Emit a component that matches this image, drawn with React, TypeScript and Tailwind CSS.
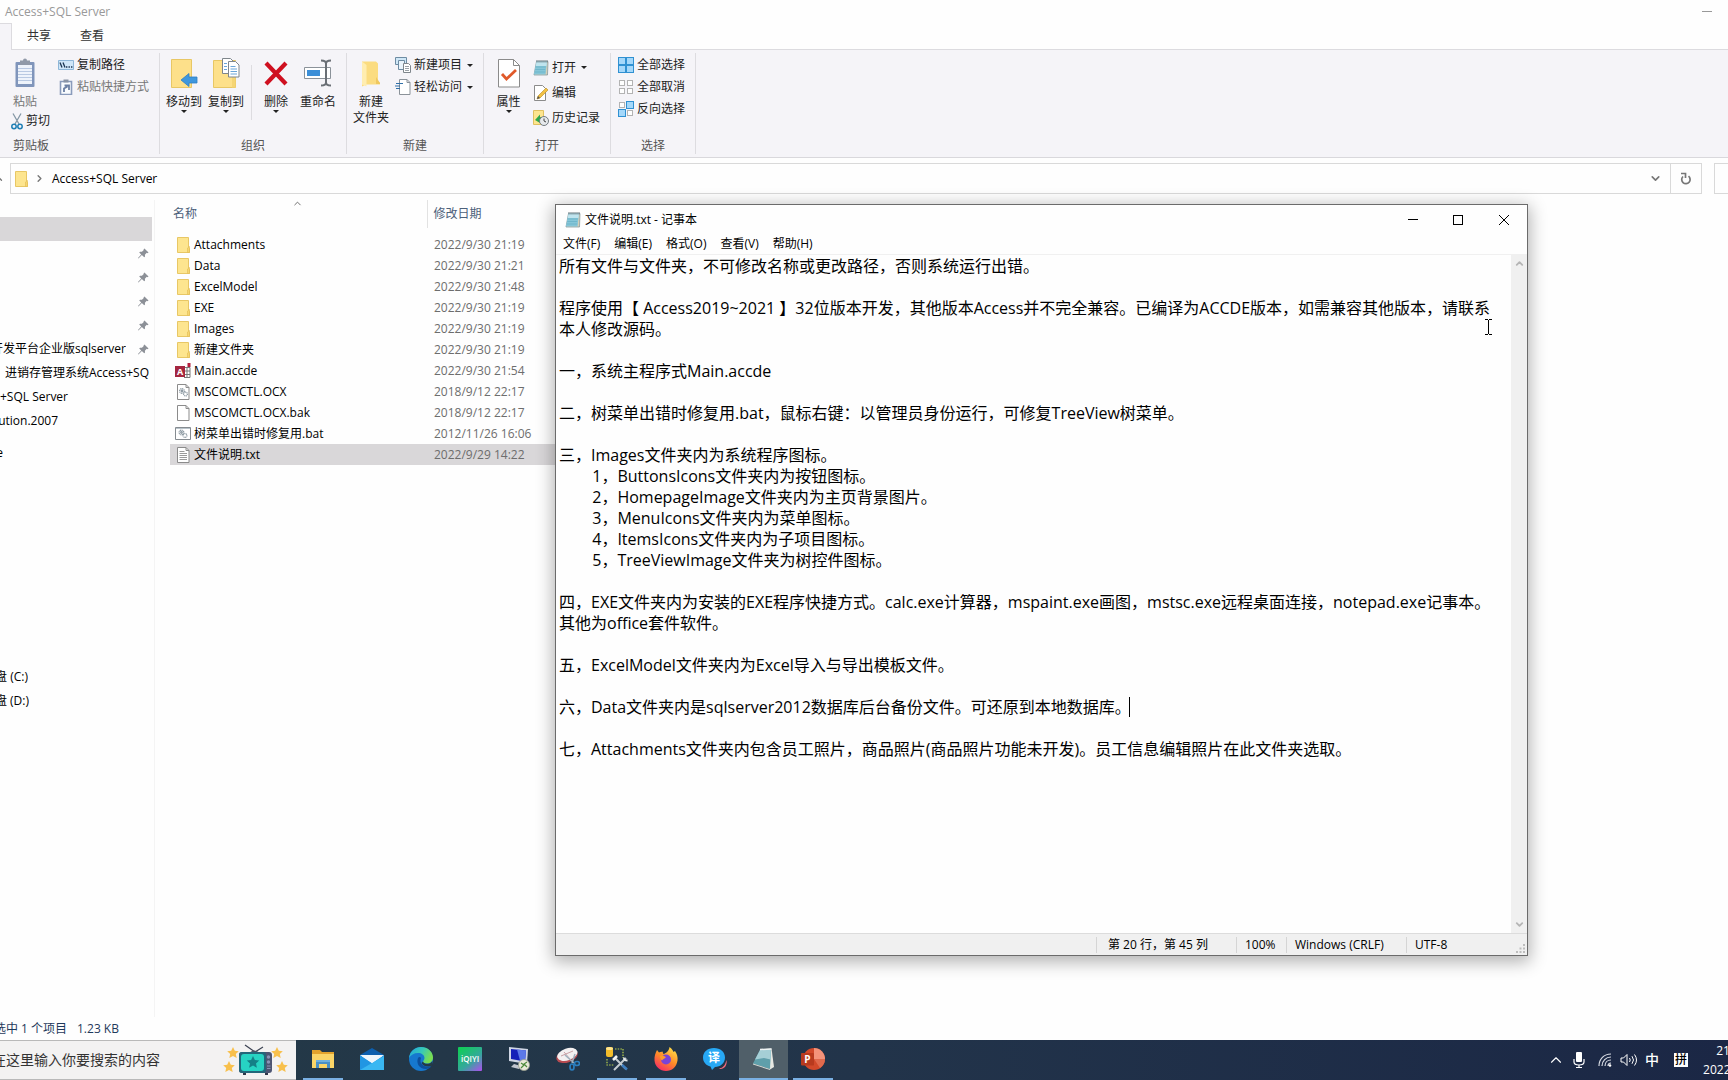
import React from "react";
import { ChevronDown, ChevronRight, ChevronUp } from "lucide-react";
import clsx from "clsx";

interface FileEntry {
  name: string;
  date: string;
  icon: React.ReactNode;
  selected?: boolean;
}

interface IconProps {
  className?: string;
}

const FolderIcon = ({ className = "w-[13px] h-4" }: IconProps) => (
  <svg viewBox="0 0 13 16" preserveAspectRatio="none" className={className}>
    <path d="M.5.5h11v11l1 0v4H.5z" fill="#fde58f" stroke="#e8c765" />
    <path d="M10.500 15.500V11l2-1.500v6z" fill="#f6d671" stroke="#e0bc55" strokeWidth=".6" />
  </svg>
);

const PageIcon = ({ lines = false, gears = false }: { lines?: boolean; gears?: boolean }) => (
  <svg viewBox="0 0 13 16" className="w-[13px] h-4">
    <path d="M.5.5h8.500l3 3v12H.5z" fill="#fff" stroke="#8b8b8b" />
    <path d="M9 .5v3h3" fill="none" stroke="#8b8b8b" />
    {lines && <path d="M2.500 4.500h5M2.500 6.500h7.500M2.500 8.500h7.500M2.500 10.500h7.500M2.500 12.500h7.500" stroke="#9a9a9a" />}
    {gears && <Gears x={5} y={7} />}
  </svg>
);

const Gears = ({ x, y }: { x: number; y: number }) => (
  <g fill="none" stroke="#8d9aa3" strokeWidth="1.200">
    <circle cx={x} cy={y} r="2.400" strokeDasharray="1.200 .5" />
    <circle cx={x} cy={y} r=".8" />
    <circle cx={x + 3.5} cy={y + 3} r="1.900" strokeDasharray="1 .5" />
  </g>
);

const BatIcon = () => (
  <svg viewBox="0 0 16 13" className="w-4 h-[13px]">
    <path d="M.5.5h15v12H.5z" fill="#fff" stroke="#858b90" />
    <path d="M1 1.500h14" stroke="#b9c3ca" />
    <Gears x={6.5} y={5.5} />
  </svg>
);

const AccessIcon = () => (
  <svg viewBox="0 0 16 16" className="w-4 h-4">
    <path d="M9 4.500h6v10H9M9 8h6M9 11.500h6M12 4.500v10" fill="#fff" stroke="#777" />
    <path d="M0 3h10v11H0z" fill="#a4263f" />
    <path d="M12.500 0h3v4h-3z" fill="#b51f3d" />
    <text x="5" y="12" textAnchor="middle" fontSize="9" fontWeight="bold" fill="#fff" fontFamily="Open Sans">A</text>
  </svg>
);

const PinIcon = () => (
  <svg viewBox="0 0 12 12" className="w-[11px] h-[11px]">
    <path d="M7 .5 11.500 5l-1.200.6-.8-.3-2 2 .2 2-.9.9-2.600-2.600L.5 11.500 0 11l3.500-4L1.300 4.900l.9-.9 2.100.2 2-2-.2-.9z" fill="#8c9097" />
  </svg>
);

const PasteIcon = () => (
  <svg viewBox="0 0 22 30" className="w-[22px] h-[30px]">
    <rect x="1.500" y="4" width="19" height="25" rx="1" fill="#8095bb" />
    <path d="M4 7h14v19H4z" fill="#eef3fb" />
    <path d="M6 2.500h3a2 2 0 0 1 4 0h3V7H6z" fill="#9099a8" />
    <path d="M4 10.500h14M4 13.500h14M4 16.500h14M4 19.500h14M4 22.500h14" stroke="#b9c9e2" />
  </svg>
);

const CutIcon = () => (
  <svg viewBox="0 0 12 17" className="w-3 h-[17px]">
    <path d="M2 .5 8 11M10 .5 4 11" stroke="#8497a5" strokeWidth="1.300" fill="none" />
    <circle cx="3" cy="13.500" r="2.200" fill="none" stroke="#1f7fb5" strokeWidth="1.500" />
    <circle cx="9" cy="13.500" r="2.200" fill="none" stroke="#1f7fb5" strokeWidth="1.500" />
  </svg>
);

const CopyPathIcon = () => (
  <svg viewBox="0 0 16 16" className="w-4 h-4">
    <path d="M.5 3.500h15v9H.5z" fill="#cfe6f8" stroke="#8db6d8" />
    <path d="m2 5.500 2 5M5 5.500l2 5" stroke="#1b3552" strokeWidth="1.300" />
    <path d="M8 10h1.400M10.500 10h1.400M13 10h1.400" stroke="#1b3552" strokeWidth="1.300" />
  </svg>
);

const PasteShortcutIcon = () => (
  <svg viewBox="0 0 16 16" className="w-4 h-4">
    <path d="M2.500 2.500h11v13h-11z" fill="#fafcff" stroke="#8a9bbb" strokeWidth="1.600" />
    <path d="M5.500.5h5v3h-5z" fill="#8a94a6" />
    <path d="M6 13V9.500L9.500 7.500M6.500 6.500H11V11" fill="none" stroke="#6b7fa3" strokeWidth="1.800" />
  </svg>
);

const MoveToIcon = () => (
  <svg viewBox="0 0 28 32" className="w-7 h-8">
    <path d="M1.500 2.500h20v28h-20z" fill="#fde08a" stroke="#e8c765" />
    <path d="m11 23 8-6.500V20h8v6h-8v3.500z" fill="#3f97dd" stroke="#2f7fc4" strokeWidth=".8" />
  </svg>
);

const CopyToIcon = () => (
  <svg viewBox="0 0 28 32" className="w-7 h-8">
    <path d="M1.500 3.500h22v27h-22z" fill="#fde08a" stroke="#e8c765" />
    <path d="M20 30.500v-11l3.500-1v12z" fill="#f5d575" />
    <path d="M10.500 1.500h8l3 3v12h-11z" fill="#fff" stroke="#7f868c" />
    <path d="M16.500 4.500h7l3.500 3.500v12H16.500z" fill="#fff" stroke="#7f868c" />
    <path d="M12 6.500h3M12 9.500h3M12 12.500h3M18.500 9.500h5M18.500 12h6.500M18.500 14.500h6.500M18.500 17h6.500" stroke="#6aa5d8" />
  </svg>
);

const DeleteIcon = () => (
  <svg viewBox="0 0 28 32" className="w-7 h-8">
    <path d="m4 6 20 21M24 6 4 27" stroke="#cf1020" strokeWidth="4.200" />
  </svg>
);

const RenameIcon = () => (
  <svg viewBox="0 0 28 32" className="w-7 h-8">
    <path d="M.5 10.500h26v11H.5z" fill="#fff" stroke="#8b9299" />
    <path d="M3 13h13v6H3z" fill="#3c8fd8" />
    <path d="M17 3.500q5 0 5 3v19q0 3-5 3M27 3.500q-5 0-5 3v19q0 3 5 3" fill="none" stroke="#6a6f75" strokeWidth="2" />
  </svg>
);

const NewFolderIcon = () => (
  <svg viewBox="0 0 20 32" className="w-5 h-8">
    <path d="M1 4.500h14l2 2V25l2 .5v2H5l-4 2z" fill="#fbdc80" />
    <path d="M1 4.500 5.500 8v21.500l-4.500-2z" fill="#ffedb0" />
    <path d="M15 27V20l4 6v1z" fill="#efc85f" />
  </svg>
);

const NewItemIcon = () => (
  <svg viewBox="0 0 16 16" className="w-4 h-4">
    <path d="M.5.5h11v7H.5z" fill="#cfe7f7" stroke="#6e8ca3" />
    <path d="M3.500 3.500h6v9h-6z" fill="#eaf4fb" stroke="#6e8ca3" />
    <path d="M8.500 6.500h5l2 2v7h-7z" fill="#fff" stroke="#7f868c" />
    <path d="M10 9.500h4M10 11.500h4M10 13.500h4" stroke="#9aa1a7" />
  </svg>
);

const EasyAccessIcon = () => (
  <svg viewBox="0 0 16 16" className="w-4 h-4">
    <path d="M4.500.5h7.500l3 3v12H4.500z" fill="#fff" stroke="#8b9299" />
    <path d="M12 .5v3h3" fill="none" stroke="#8b9299" />
    <path d="M1 4.500h7M0 7h5M1 9.500h4" stroke="#2f6fa8" strokeWidth="1.200" />
  </svg>
);

const PropertiesIcon = () => (
  <svg viewBox="0 0 22 32" className="w-[22px] h-8">
    <path d="M.5 2.500h15l6 6v21.500H.5z" fill="#fff" stroke="#8b8b8b" />
    <path d="M15.500 2.500v6h6" fill="none" stroke="#8b8b8b" />
    <path d="m4 17 4.500 5L18 13" fill="none" stroke="#e0592a" strokeWidth="2.800" />
  </svg>
);

const NotepadIcon = ({ className = "w-4 h-4" }: IconProps) => (
  <svg viewBox="0 0 16 16" className={className}>
    <path d="M3.500 1.500h11.500L14.500 15H1z" fill="#d5d0b8" stroke="#7c8f96" strokeWidth=".7" />
    <path d="M3.500 1.500h10.500l-1.500 13H.8z" fill="#86c6d8" />
    <path d="M3.500 1.500h10.500l-.5 4.500H2.800z" fill="#bfe4ee" />
    <path d="M4 0v2.500M6 0v2.500M8 0v2.500M10 0v2.500M12 0v2.500M14 0v2.500" stroke="#5a6a70" strokeWidth=".9" />
    <path d="M2.700 7h10M2.200 9.500h10M1.800 12h10.500" stroke="#5fabc2" strokeWidth=".6" />
  </svg>
);

const EditIcon = () => (
  <svg viewBox="0 0 16 16" className="w-4 h-4">
    <path d="M1.500.5h8l3 3v12h-11z" fill="#fff" stroke="#8b8b8b" />
    <path d="m4 14 1-3 8-8 2 2-8 8z" fill="#f2c144" stroke="#b98a22" strokeWidth=".6" />
    <path d="m4 14 1-3 2 2z" fill="#555" />
  </svg>
);

const HistoryIcon = () => (
  <svg viewBox="0 0 16 16" className="w-4 h-4">
    <path d="M.5.5h10v14H.5z" fill="#fde58f" stroke="#e0c060" />
    <path d="M2 10 7 4.500V7c3 0 4 1 4 2-2-.6-4 0-4 1v3z" fill="#2fa84a" />
    <circle cx="11" cy="11" r="4.500" fill="#e6e9ec" stroke="#727a80" />
    <path d="M11 8.500V11l2 1" fill="none" stroke="#444" />
  </svg>
);

const SelectIcon = ({ filled }: { filled: boolean[] }) => (
  <svg viewBox="0 0 16 16" className="w-4 h-4">
    {filled.map((on, i) => {
      const x = i % 2 ? 9 : 1;
      const y = i > 1 ? 9 : 1;
      return on ? (
        <rect key={i} x={x - 0.5} y={y - 0.5} width="7" height="7" fill="#a5d8fa" stroke="#3091d2" />
      ) : (
        <rect key={i} x={x + 0.5} y={y + 0.5} width="5" height="5" fill="#fff" stroke="#b3b3b3" />
      );
    })}
  </svg>
);

const Arrow = () => <span className="border-x-[3px] border-t-[3px] border-x-transparent border-t-[#222]" />;

interface RibbonButtonProps {
  icon: React.ReactNode;
  label: React.ReactNode;
  arrow?: boolean;
  muted?: boolean;
  className?: string;
}

const LargeButton = ({ icon, label, arrow, muted, className }: RibbonButtonProps) => (
  <button className={clsx("flex flex-col items-center pt-[7px]", muted && "text-[#777]", className)}>
    <span className="flex h-8 items-center justify-center">{icon}</span>
    <span className="mt-[5px] leading-4 whitespace-nowrap">{label}</span>
    {arrow && <Arrow />}
  </button>
);

const SmallButton = ({ icon, label, arrow, muted, className = "h-[22px]" }: RibbonButtonProps) => (
  <button className={clsx("flex items-center gap-[3px] whitespace-nowrap", muted && "text-[#777]", className)}>
    {icon}
    <span>{label}</span>
    {arrow && <span className="ml-[2px] flex"><Arrow /></span>}
  </button>
);

const RibbonGroup = ({ title, className, labelClass = "text-center", children }: {
  title: string;
  className: string;
  labelClass?: string;
  children: React.ReactNode;
}) => (
  <section className={clsx("flex shrink-0 flex-col border-r border-[#dddce0]", className)}>
    <div className="flex flex-1">{children}</div>
    <div className={clsx("text-[#555] leading-4", labelClass)}>{title}</div>
  </section>
);

const files: FileEntry[] = [
  { name: "Attachments", date: "2022/9/30 21:19", icon: <FolderIcon /> },
  { name: "Data", date: "2022/9/30 21:21", icon: <FolderIcon /> },
  { name: "ExcelModel", date: "2022/9/30 21:48", icon: <FolderIcon /> },
  { name: "EXE", date: "2022/9/30 21:19", icon: <FolderIcon /> },
  { name: "Images", date: "2022/9/30 21:19", icon: <FolderIcon /> },
  { name: "新建文件夹", date: "2022/9/30 21:19", icon: <FolderIcon /> },
  { name: "Main.accde", date: "2022/9/30 21:54", icon: <AccessIcon /> },
  { name: "MSCOMCTL.OCX", date: "2018/9/12 22:17", icon: <PageIcon gears /> },
  { name: "MSCOMCTL.OCX.bak", date: "2018/9/12 22:17", icon: <PageIcon /> },
  { name: "树菜单出错时修复用.bat", date: "2012/11/26 16:06", icon: <BatIcon /> },
  { name: "文件说明.txt", date: "2022/9/29 14:22", icon: <PageIcon lines />, selected: true },
];

const noteText = `所有文件与文件夹，不可修改名称或更改路径，否则系统运行出错。

程序使用【 Access2019~2021 】32位版本开发，其他版本Access并不完全兼容。已编译为ACCDE版本，如需兼容其他版本，请联系
本人修改源码。

一，系统主程序式Main.accde

二，树菜单出错时修复用.bat，鼠标右键：以管理员身份运行，可修复TreeView树菜单。

三，Images文件夹内为系统程序图标。
        1，ButtonsIcons文件夹内为按钮图标。
        2，HomepageImage文件夹内为主页背景图片。
        3，MenuIcons文件夹内为菜单图标。
        4，ItemsIcons文件夹内为子项目图标。
        5，TreeViewImage文件夹为树控件图标。

四，EXE文件夹内为安装的EXE程序快捷方式。calc.exe计算器，mspaint.exe画图，mstsc.exe远程桌面连接，notepad.exe记事本。
其他为office套件软件。

五，ExcelModel文件夹内为Excel导入与导出模板文件。

六，Data文件夹内是sqlserver2012数据库后台备份文件。可还原到本地数据库。

七，Attachments文件夹内包含员工照片，商品照片(商品照片功能未开发)。员工信息编辑照片在此文件夹选取。`;

const Ribbon = () => (
  <div className="flex h-[108px] shrink-0 border-b border-[#d9d8dc] bg-[#f5f4f8] pt-[3px] pb-[3px] text-[#222]">
    <RibbonGroup title="剪贴板" className="w-[160px]" labelClass="pl-[13px]">
      <div className="-mt-[3px] flex w-[58px] flex-col">
        <LargeButton icon={<PasteIcon />} label="粘贴" muted className="w-[50px]" />
        <SmallButton icon={<CutIcon />} label="剪切" className="ml-[11px] h-[22px]" />
      </div>
      <div className="flex flex-col pt-px">
        <SmallButton icon={<CopyPathIcon />} label="复制路径" />
        <SmallButton icon={<PasteShortcutIcon />} label="粘贴快捷方式" muted />
      </div>
    </RibbonGroup>
    <RibbonGroup title="组织" className="w-[187px]">
      <div className="-mt-[3px] flex pl-[3px]">
        <LargeButton icon={<MoveToIcon />} label="移动到" arrow className="w-[42px]" />
        <LargeButton icon={<CopyToIcon />} label="复制到" arrow className="w-[42px]" />
        <div className="mx-1 mt-[15px] h-[55px] w-px bg-[#dddce0]" />
        <LargeButton icon={<DeleteIcon />} label="删除" arrow className="w-[40px]" />
        <LargeButton icon={<RenameIcon />} label="重命名" className="w-[44px]" />
      </div>
    </RibbonGroup>
    <RibbonGroup title="新建" className="w-[137px]">
      <div className="-mt-[3px] flex">
        <LargeButton icon={<NewFolderIcon />} label={<>新建<br />文件夹</>} className="w-12" />
      </div>
      <div className="flex flex-col pt-px">
        <SmallButton icon={<NewItemIcon />} label="新建项目" arrow />
        <SmallButton icon={<EasyAccessIcon />} label="轻松访问" arrow />
      </div>
    </RibbonGroup>
    <RibbonGroup title="打开" className="w-[127px]">
      <div className="-mt-[3px] flex">
        <LargeButton icon={<PropertiesIcon />} label="属性" arrow className="w-[49px]" />
      </div>
      <div className="flex flex-col pt-[2px]">
        <SmallButton icon={<NotepadIcon />} label="打开" arrow className="h-[25px]" />
        <SmallButton icon={<EditIcon />} label="编辑" className="h-[25px]" />
        <SmallButton icon={<HistoryIcon />} label="历史记录" className="h-[25px]" />
      </div>
    </RibbonGroup>
    <RibbonGroup title="选择" className="w-[85px]">
      <div className="flex flex-col pt-px pl-[7px]">
        <SmallButton icon={<SelectIcon filled={[true, true, true, true]} />} label="全部选择" />
        <SmallButton icon={<SelectIcon filled={[false, false, false, false]} />} label="全部取消" />
        <SmallButton icon={<SelectIcon filled={[false, true, true, false]} />} label="反向选择" />
      </div>
    </RibbonGroup>
  </div>
);

const AddressBar = () => (
  <div className="flex h-[42px] shrink-0 items-center overflow-hidden pb-[6px] pt-[5px]">
    <div className="w-[10px] text-[#777]"><ChevronUp size={10} strokeWidth={3} className="-ml-1.5" /></div>
    <div className="flex h-[31px] flex-1 items-center border border-[#d9d9d9] pl-1">
      <FolderIcon />
      <ChevronRight size={11} strokeWidth={3} className="mx-[6px] text-[#777]" />
      <span className="flex-1 pl-px">Access+SQL Server</span>
      <button aria-label="以前的位置" className="flex w-[29px] items-center justify-center text-[#777]">
        <ChevronDown size={13} strokeWidth={3} />
      </button>
      <button aria-label="刷新" className="flex h-full w-[31px] items-center justify-center border-l border-[#d9d9d9]">
        <svg viewBox="0 0 12 14" className="w-3 h-[14px]">
          <path d="M8.500 4.200a4.200 4.200 0 1 1-5.500.3M1 1.500h4.500V6" fill="none" stroke="#777" strokeWidth="1.700" />
        </svg>
      </button>
    </div>
    <input aria-label="搜索" className="ml-3 h-[31px] w-[14px] border border-r-0 border-[#d9d9d9]" />
  </div>
);

const Sidebar = () => (
  <nav className="flex w-[155px] shrink-0 flex-col overflow-hidden border-r border-[#f4f4f4] pt-[17px] whitespace-nowrap">
    <div className="h-6 w-[152px] bg-[#d9d7d9]" />
    {[0, 1, 2, 3].map((i) => (
      <div key={i} className="flex h-6 w-[149px] items-center justify-end"><PinIcon /></div>
    ))}
    <div className="flex h-6 w-[149px] items-center justify-between">
      <a href="#" className="flex w-[126px] justify-end overflow-hidden">开发平台企业版sqlserver</a>
      <PinIcon />
    </div>
    <a href="#" className="block h-6 w-[152px] overflow-hidden pl-[5px] leading-6">进销存管理系统Access+SQ</a>
    <a href="#" className="block h-6 w-[69px] leading-6">+SQL Server</a>
    <a href="#" className="flex h-6 w-[58px] justify-end overflow-hidden leading-6">Solution.2007</a>
    <a href="#" className="mt-2 flex h-6 w-[3px] justify-end overflow-hidden leading-6">OneDrive</a>
    <div className="h-[200px]" />
    <a href="#" className="flex h-6 w-[28px] justify-end overflow-hidden leading-6">本地磁盘 (C:)</a>
    <a href="#" className="flex h-6 w-[29px] justify-end overflow-hidden leading-6">本地磁盘 (D:)</a>
  </nav>
);

const FileList = () => (
  <main className="flex-1 overflow-hidden pl-[15px]">
    <table className="w-full max-w-[1100px] table-fixed border-collapse text-left">
      <thead>
        <tr className="h-[28px] align-top text-[#4c607a]">
          <th className="relative w-[257px] border-r border-[#e2e2e2] pl-[3px] pt-1 font-normal leading-5">
            <ChevronUp size={11} strokeWidth={2} className="absolute left-[122px] -top-[2px] text-[#666]" />
            名称
          </th>
          <th className="pl-[6px] pt-1 font-normal leading-5">修改日期</th>
        </tr>
        <tr className="h-[6px]"><td colSpan={2} /></tr>
      </thead>
      <tbody>
        {files.map((file) => (
          <tr key={file.name} className={clsx("h-[21px] leading-[21px]", file.selected && "bg-[#d9d7d9]")}>
            <td className="p-0">
              <div className="flex h-[21px] items-center gap-[2px] pl-1">
                <span className="flex w-[18px] justify-center">{file.icon}</span>
                <span>{file.name}</span>
              </div>
            </td>
            <td className="p-0 pl-[7px] text-[#6d6d6d]">{file.date}</td>
          </tr>
        ))}
      </tbody>
    </table>
  </main>
);

const NotepadWindow = () => (
  <div className="absolute left-[555px] top-[204px] flex h-[752px] w-[973px] flex-col border border-[#6b6b6b] bg-[#fefefe] shadow-[0_4px_16px_2px_rgba(0,0,0,0.3)]">
    <div className="flex h-[29px] shrink-0 items-center pl-[9px]">
      <NotepadIcon />
      <span className="ml-1 flex-1">文件说明.txt - 记事本</span>
      <button aria-label="最小化" className="flex h-full w-[45px] items-center justify-center">
        <span className="h-px w-[10px] bg-black" />
      </button>
      <button aria-label="最大化" className="flex h-full w-[45px] items-center justify-center">
        <span className="h-[10px] w-[10px] border border-black" />
      </button>
      <button aria-label="关闭" className="flex h-full w-[47px] items-center justify-center">
        <svg viewBox="0 0 10 10" className="w-[10px] h-[10px]"><path d="M0 0l10 10M10 0 0 10" stroke="#000" /></svg>
      </button>
    </div>
    <div className="flex h-[21px] shrink-0 items-center gap-[14px] border-b border-[#f0f0f0] pl-[7px]">
      {["文件(F)", "编辑(E)", "格式(O)", "查看(V)", "帮助(H)"].map((item) => (
        <button key={item}>{item}</button>
      ))}
    </div>
    <div className="relative flex flex-1">
      <textarea
        aria-label="文件说明.txt"
        defaultValue={noteText}
        wrap="off"
        spellCheck={false}
        className="flex-1 resize-none overflow-hidden pl-[3px] pt-px text-base leading-[21px] whitespace-pre outline-none"
      />
      <span className="absolute left-[573px] top-[442px] h-5 w-px bg-black" />
      <svg viewBox="0 0 7 16" className="absolute left-[929px] top-[64px] w-[7px] h-4">
        <path d="M0 .5h3M4 .5h3M3.500 1v14M0 15.500h3M4 15.500h3" stroke="#000" />
      </svg>
      <div className="flex w-[16px] flex-col items-center justify-between bg-[#f0f0f0] py-[3px] text-[#b5b5b5]">
        <ChevronUp size={11} strokeWidth={4} />
        <ChevronDown size={11} strokeWidth={4} />
      </div>
    </div>
    <div className="flex h-[22px] shrink-0 items-center justify-end border-t border-[#dcdcdc] bg-[#f0f0f0]">
      <span className="w-[140px] border-l border-[#d5d5d5] pl-[11px]">第 20 行，第 45 列</span>
      <span className="w-[50px] border-l border-[#d5d5d5] pl-[8px]">100%</span>
      <span className="w-[120px] border-l border-[#d5d5d5] pl-[8px]">Windows (CRLF)</span>
      <span className="w-[110px] border-l border-[#d5d5d5] pl-[8px]">UTF-8</span>
      <svg viewBox="0 0 10 10" className="mr-px mt-2 w-[10px] h-[10px] fill-[#bdbdbd]">
        <path d="M7 0h2v2H7zM7 3.500h2v2H7zM7 7h2v2H7zM3.500 3.500h2v2h-2zM3.500 7h2v2h-2zM0 7h2v2H0z" />
      </svg>
    </div>
  </div>
);

const TvDoodle = () => (
  <svg viewBox="0 0 66 32" className="w-[66px] h-8">
    {[[10, 9], [6, 23], [54, 9], [59, 23]].map(([x, y]) => (
      <path key={`${x}-${y}`} transform={`translate(${x} ${y})`} d="m0-6 1.800 3.700 4 .5-3 2.700.9 4L0 3l-3.700 1.900.9-4-3-2.700 4-.5z" fill="#f8c04c" />
    ))}
    <path d="m22 1 10 7 8-5" fill="none" stroke="#3b4252" strokeWidth="1.200" />
    <path d="M26 9q5-5 11 0z" fill="#4a5166" />
    <path d="M20 28h3v3h-3zM42 28h3v3h-3z" fill="#30374a" />
    <rect x="16" y="8" width="33" height="21" rx="3" fill="#4d5573" />
    <rect x="16" y="8" width="27" height="21" rx="3" fill="#24667a" />
    <rect x="18" y="10" width="23" height="17" rx="3" fill="#27d3c3" />
    <path d="m30 12 1.900 4 4.300.5-3.200 3 .9 4.300-3.900-2.200-3.900 2.200.9-4.300-3.200-3 4.300-.5z" fill="#157f87" />
    <circle cx="45.500" cy="13" r="1.700" fill="#8a93b5" />
    <circle cx="45.500" cy="18" r="1.700" fill="#8a93b5" />
    <path d="M44 22h3.500M44 24.500h3.500" stroke="#8a93b5" />
  </svg>
);

const ExplorerApp = () => (
  <svg viewBox="0 0 24 24" className="w-6 h-6">
    <path d="M1 3h8l2 2h12v4H1z" fill="#e3a32d" />
    <path d="M1 7h22v14H1z" fill="#fbd567" />
    <path d="M5 21v-8h14v8h-3v-4H8v4z" fill="#4a90c6" />
    <path d="M5 13h14v2H5z" fill="#6fb1e0" />
  </svg>
);

const MailApp = () => (
  <svg viewBox="0 0 24 24" className="w-6 h-6">
    <path d="M0 8 12 1l12 7v3H0z" fill="#0d5fae" />
    <path d="M2 8h20v8H2z" fill="#e8f3fb" />
    <path d="M0 8v15h24V8l-12 8z" fill="#2196e3" />
    <path d="M0 23 24 9v14z" fill="#39b7f2" />
    <path d="M0 8 12 16 24 8z" fill="#eef6fc" />
  </svg>
);

const EdgeApp = () => (
  <svg viewBox="0 0 24 24" className="w-6 h-6">
    <defs>
      <linearGradient id="edgeTop" x1="0" x2="1" y1="0" y2="0.4">
        <stop offset="0" stopColor="#1fa5e0" />
        <stop offset="0.550" stopColor="#37c9b8" />
        <stop offset="1" stopColor="#79dd51" />
      </linearGradient>
    </defs>
    <circle cx="12" cy="12" r="12" fill="#1678cf" />
    <path d="M0 11C1 4 6 0 12 0c7 0 12 5 12 10.500 0 4-3 6-6 6-2.500 0-4-1-4-2 0-.8 1.500-1.500 1.500-3.500C15.500 8 12.500 6 9 6 5 6 1.500 8 0 11z" fill="url(#edgeTop)" />
    <path d="M9 11c-2 5 1 11 8 11 2 0 4-.8 5.500-3C20 20.500 14 20 12 16c-1.300-2.500 0-4 0-5-.5-1.500-2.300-1.500-3 0z" fill="#0c4f9c" />
    <path d="M14 14.500c0 1.300 2 2.500 5 2.300 2-.2 3.500-1.300 4.300-2.800L23 19c-4 1-9 .5-10.500-3z" fill="#243a46" />
  </svg>
);

const IqiyiApp = () => (
  <svg viewBox="0 0 24 24" className="w-6 h-6">
    <defs>
      <linearGradient id="iqiyi" x1="0.2" x2="1" y1="0" y2="1">
        <stop offset="0" stopColor="#12cc5a" />
        <stop offset="0.550" stopColor="#35a79d" />
        <stop offset="1" stopColor="#b04df0" />
      </linearGradient>
    </defs>
    <rect width="24" height="24" rx="1" fill="url(#iqiyi)" />
    <text x="12" y="15" textAnchor="middle" fontSize="8" fontWeight="600" fill="#fff" fontFamily="Open Sans">iQIYI</text>
  </svg>
);

const RemoteApp = () => (
  <svg viewBox="0 0 24 24" className="w-6 h-6">
    <path d="m2 0 19 2-1 15-18-3z" fill="#cfd6e4" />
    <path d="m4 2 15 1.500-1 11L4 12z" fill="#1420b8" />
    <path d="m10 2.500 9 1-1 11-5-1z" fill="#5c79e8" />
    <path d="m7 17 7 2-2 3-8-2z" fill="#c0c5cf" />
    <circle cx="17" cy="18" r="5.500" fill="#e9ead9" stroke="#9aa08e" strokeWidth=".8" />
    <path d="m14 16 3 2-3 3M20 15l-3 2 3 3" fill="none" stroke="#4d8a3b" strokeWidth="1.200" />
  </svg>
);

const SnipApp = () => (
  <svg viewBox="0 0 24 24" className="w-6 h-6">
    <ellipse cx="11" cy="9" rx="11" ry="6.500" transform="rotate(-18 11 9)" fill="#b84b51" />
    <ellipse cx="11.500" cy="7.500" rx="10.500" ry="6" transform="rotate(-18 11 8)" fill="#f3f0f1" />
    <path d="m5 9 12-5M8 5l6 7" stroke="#c9a0a5" />
    <path d="m9 8 9 8M19 7l-3 9" stroke="#9fb1bf" strokeWidth="1.500" />
    <ellipse cx="16" cy="20" rx="2" ry="3" fill="none" stroke="#2b7fc0" strokeWidth="1.700" />
    <ellipse cx="21" cy="16.500" rx="2.500" ry="2" fill="none" stroke="#2b7fc0" strokeWidth="1.700" />
  </svg>
);

const SsmsApp = () => (
  <svg viewBox="0 0 24 24" className="w-6 h-6">
    <path d="M2 12v6h7M10 2h8v9" fill="none" stroke="#b9d34a" strokeWidth="1.200" strokeDasharray="1.500 1.200" />
    <rect x="1" y="0" width="7" height="10" rx="2" fill="#f4bd2a" />
    <ellipse cx="4.500" cy="1.500" rx="3.500" ry="1.500" fill="#ffe58f" />
    <path d="m10 11 11 11M21 11 9 23" stroke="#c3cbd1" strokeWidth="2" />
    <path d="m8 13 4-4" stroke="#f2f4f5" strokeWidth="2.500" />
    <path d="M19 10.500q-.5 3 3.500 3" fill="none" stroke="#e4e8ea" strokeWidth="1.800" />
    <path d="m17 18 5 4.500" stroke="#3d7ec1" strokeWidth="2.500" />
  </svg>
);

const FirefoxApp = () => (
  <svg viewBox="0 0 24 24" className="w-6 h-6">
    <defs>
      <linearGradient id="fox" x1="0.800" x2="0.200" y1="0" y2="1">
        <stop offset="0" stopColor="#ffe14a" />
        <stop offset="0.500" stopColor="#ff8a27" />
        <stop offset="1" stopColor="#f5256a" />
      </linearGradient>
    </defs>
    <path d="M3 3c1 1 1.500 2 2 2.500 1-.7 2.500-1 4-.7C8.500 6 9 7 10 7c2-1 5-3 5.500-7 3 2 3.500 4 4 5l1.500-1c2 3 3 6 2.500 9.500C22.500 20 18 24 12 24S1 19.500.5 13.500C.2 9.500 1.500 5.500 3 3z" fill="url(#fox)" />
    <circle cx="12" cy="12.500" r="5" fill="#7a43d6" />
    <path d="M6 9c2-1 4 0 6 1-1 2-3 1.500-4 3.500C7 12.500 6 11 6 9z" fill="#ff9a2c" />
  </svg>
);

const TranslateApp = () => (
  <svg viewBox="0 0 24 24" className="w-6 h-6">
    <path d="M15 21c4 1 7-2 8.500-8 .8 4-1 9-6 9z" fill="#f26a7d" />
    <path d="M11 1c6.500 0 11 4 11 9.500S17.500 20 12 20l-3 3-1.500-3.500C3 18.500 0 15 0 10.500 0 5 4.500 1 11 1z" fill="#27a8f5" />
    <text x="11" y="15" textAnchor="middle" fontSize="12" fontWeight="bold" fill="#fff" fontFamily="Noto Sans CJK SC">译</text>
  </svg>
);

const NotepadApp = () => (
  <svg viewBox="0 0 24 24" className="w-6 h-6">
    <path d="M8 2.500 19.500 1.500 22 20l-4 2.500z" fill="#e6e8e2" />
    <path d="M8 3 19 2.500 18 22 1 16.500z" fill="#5f9fab" />
    <path d="M8 3 19 2.500l-.5 10L12 11l-9 1.500z" fill="#a5cfd6" />
    <path d="M1 16.500 18 22v1L1 17.500z" fill="#d7dcd8" />
    <path d="M8 2.500 19.500 2" stroke="#eef3f3" strokeWidth="1.500" />
  </svg>
);

const PowerPointApp = () => (
  <svg viewBox="0 0 24 24" className="w-6 h-6">
    <circle cx="13" cy="12" r="11" fill="#d2492a" />
    <path d="M13 1a11 11 0 0 1 11 11H13z" fill="#f4937a" />
    <path d="M13 12h11a11 11 0 0 1-5 9z" fill="#e06a4d" />
    <rect x="0" y="6" width="13" height="12.500" rx="1" fill="#b83a1e" />
    <text x="6.500" y="16" textAnchor="middle" fontSize="10" fontWeight="bold" fill="#fff" fontFamily="Open Sans">P</text>
  </svg>
);

const taskApps = [
  { name: "文件资源管理器", icon: <ExplorerApp />, running: true },
  { name: "邮件", icon: <MailApp /> },
  { name: "Edge", icon: <EdgeApp /> },
  { name: "爱奇艺", icon: <IqiyiApp /> },
  { name: "远程桌面连接", icon: <RemoteApp /> },
  { name: "截图工具", icon: <SnipApp /> },
  { name: "SQL Server", icon: <SsmsApp />, running: true },
  { name: "Firefox", icon: <FirefoxApp />, running: true },
  { name: "翻译", icon: <TranslateApp /> },
  { name: "记事本", icon: <NotepadApp />, running: true, active: true },
  { name: "PowerPoint", icon: <PowerPointApp />, running: true },
];

const Taskbar = () => (
  <footer className="flex h-10 shrink-0 overflow-hidden bg-linear-to-r from-[#243a46] via-[#22344a] to-[#1b2745] text-white">
    <label className="flex w-[296px] shrink-0 items-center border-y border-[#b9b9b9] bg-[#f3f2f2]">
      <input
        aria-label="搜索"
        placeholder="在这里输入你要搜索的内容"
        className="w-[223px] -indent-2 text-sm text-black outline-none placeholder:text-[#333]"
      />
      <TvDoodle />
    </label>
    <div className="ml-[2px] flex">
      {taskApps.map((app) => (
        <button
          key={app.name}
          aria-label={app.name}
          className={clsx("flex w-[49px] flex-col items-center", app.active && "bg-[#505f69]")}
        >
          <span className="flex flex-1 items-center">{app.icon}</span>
          <span className={clsx("h-[2px]", app.running && "bg-[#7ab0e3]", app.active ? "w-full" : "w-10")} />
        </button>
      ))}
    </div>
    <div className="ml-auto flex shrink-0 items-center">
      <ChevronUp size={18} strokeWidth={1.5} />
      <svg viewBox="0 0 12 18" className="ml-2 w-3 h-[18px]">
        <rect x="3" y="1" width="6" height="10" rx="1" fill="#fff" />
        <path d="M1 8v3q0 3 5 3t5-3V8M6 14v2.500M3 16.500h6" fill="none" stroke="#fff" strokeWidth="1.200" />
      </svg>
      <svg viewBox="0 0 14 14" className="ml-[13px] w-[14px] h-[14px]">
        <path d="M1 13C1 6 6 1 13 1M4 13c0-5 4-9 9-9M7 13c0-3.500 2.500-6 6-6M10 13c0-2 1-3 3-3" fill="none" stroke="#d8dce4" strokeWidth="1.200" />
        <circle cx="12" cy="12.500" r="1.300" fill="#fff" />
      </svg>
      <svg viewBox="0 0 18 14" className="ml-2 w-[18px] h-[14px]">
        <path d="M1 5h2.500L7 1.500v11L3.500 9H1z" fill="none" stroke="#fff" />
        <path d="M9.500 5q1.500 2 0 4M12 3.200q3 3.800 0 7.600M14.500 1.500q4 5.500 0 11" fill="none" stroke="#fff" />
      </svg>
      <span className="ml-[7px] text-sm font-medium">中</span>
      <span className="ml-[15px] flex h-[14px] w-[14px] items-center justify-center bg-white text-xs font-medium text-black">拼</span>
      <div className="ml-[11px] flex w-[29px] justify-center overflow-hidden pl-[2px]">
        <div className="flex flex-col items-center leading-[19px] whitespace-nowrap ml-[34px]">
          <span>21:55</span>
          <span>2022/9/30</span>
        </div>
      </div>
    </div>
  </footer>
);

const App = () => {
  return (
    <div className="relative flex h-screen w-full flex-col overflow-hidden bg-[#fefefe] font-['Open_Sans','Noto_Sans_CJK_SC',sans-serif] text-xs text-black">
      <header className="flex h-[23px] shrink-0 items-center justify-between pl-[5px] pr-4 text-[#999]">
        <span>Access+SQL Server</span>
        <button aria-label="最小化" className="h-px w-[10px] bg-[#999]" />
      </header>
      <div className="flex h-[27px] shrink-0">
        <div className="w-3 border-r border-t border-[#dcdbdf] bg-[#f5f4f8]" />
        <div className="flex flex-1 items-center gap-[29px] border-b border-[#dcdbdf] pl-[15px] text-[#333]">
          <button>共享</button>
          <button>查看</button>
        </div>
      </div>
      <Ribbon />
      <AddressBar />
      <div className="flex min-h-0 flex-1">
        <Sidebar />
        <FileList />
      </div>
      <div className="flex h-[23px] shrink-0 items-center text-[#1e395b]">
        <div className="flex w-[67px] justify-end overflow-hidden whitespace-nowrap">选中 1 个项目</div>
        <span className="ml-[10px]">1.23 KB</span>
      </div>
      <Taskbar />
      <NotepadWindow />
    </div>
  );
};

export default App;
